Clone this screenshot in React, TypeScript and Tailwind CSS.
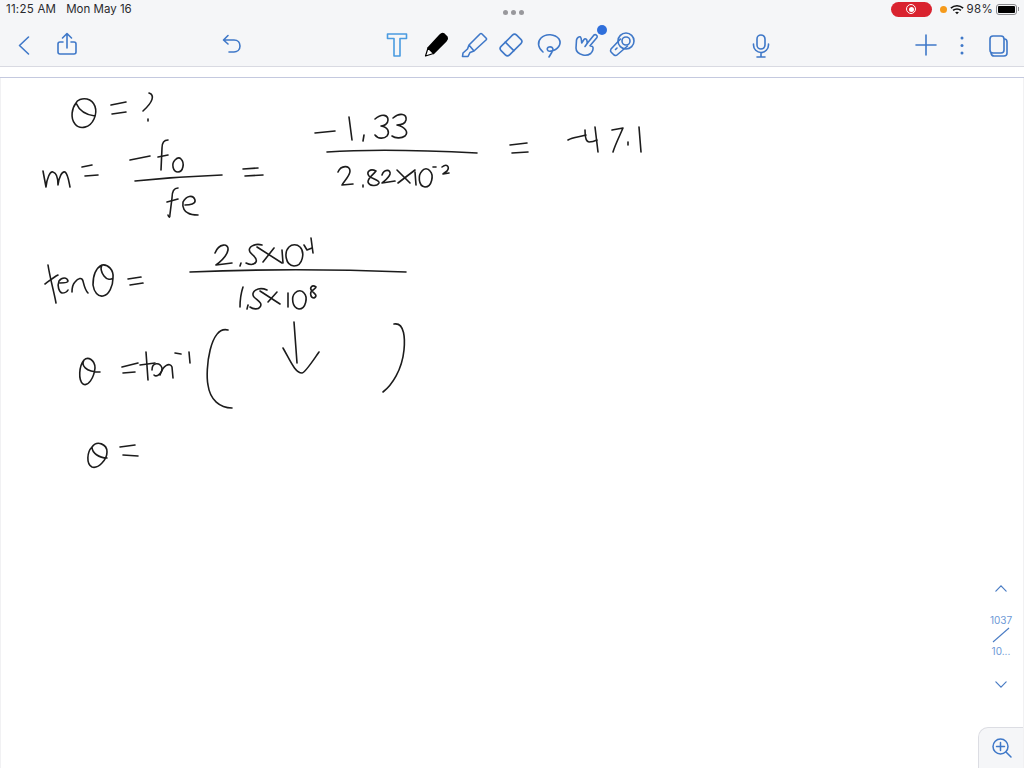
import type { ReactNode } from 'react';

// handwritten note, in page coordinates
const ink = [
  // theta = ?
  'M76,103 C72,108 70,118 75,124 C80,130 90,128 94,119 C98,110 95,101 87,99 C82,98 77,100 76,103 C79,110 86,115 95,116',
  'M111,105 L126,102', 'M112,114 L126,112',
  'M149,93 C155,95 153,102 143,111', 'M148,119 L148,121',
  // m = -fo / fe =
  'M43,171 L46,187 C47,178 50,171 53,172 C57,173 58,180 58,185 C59,177 62,171 65,172 C68,174 69,182 70,187',
  'M82,167 L92,165', 'M85,176 L98,175',
  'M130,160 L150,156', 'M168,140 C164,140 162,143 162,148 L161,170', 'M158,157 L168,155',
  'M175,160 C171,164 173,172 178,172 C183,172 185,163 181,159 C179,157 177,158 175,160',
  'M135,181 C165,178 195,176 222,175',
  'M178,188 C174,188 172,192 172,198 L170,214 C170,218 169,218 168,215', 'M167,202 L178,199',
  'M185,205 C190,205 196,204 195,200 C193,194 186,196 183,202 C182,208 185,212 188,213 C191,215 195,215 198,215',
  'M243,169 L258,168', 'M245,176 L263,175',
  // -1,33
  'M315,133 L335,131', 'M349,117 L352,140', 'M364,135 L363,141',
  'M375,119 C382,113 388,115 388,120 C388,124 384,126 381,126 C388,127 390,132 387,136 C384,139 378,139 375,135',
  'M393,118 C400,112 407,114 406,120 C405,124 400,125 397,125 C405,127 409,132 405,136 C401,139 395,138 392,136',
  'M327,152 C370,149 420,150 477,153',
  // 2,82x10^-2
  'M338,172 C341,165 350,165 350,171 C350,176 344,181 342,185 L353,184', 'M363,185 L363,187',
  'M376,171 C370,168 366,172 369,176 C372,179 380,180 379,183 C377,187 369,186 368,182 C368,178 372,176 376,171',
  'M382,175 C384,169 391,169 390,174 C389,178 384,181 382,183 L395,181',
  'M397,170 L410,183', 'M398,183 L415,170', 'M415,172 L416,185',
  'M422,171 C418,175 418,186 425,187 C432,187 434,175 430,171 C428,168 424,168 422,171',
  'M433,167 L436,167', 'M442,167 C447,163 450,167 447,171 L443,174 L449,173',
  // = -47.1
  'M510,145 L527,143', 'M512,153 L528,152',
  'M568,140 C573,137 580,137 586,135', 'M585,130 C585,136 586,142 589,142 C592,142 595,141 597,140', 'M595,127 L598,152',
  'M612,130 L623,128 C620,135 615,145 613,152', 'M628,142 L628,145', 'M639,127 L641,152',
  // tan theta =
  'M48,265 C50,278 54,292 56,303', 'M45,284 C49,281 54,277 58,275',
  'M60,283 C63,283 68,283 68,281 C67,277 62,277 59,281 C57,286 59,292 62,293 C64,293 67,292 68,290',
  'M72,292 C72,287 73,284 75,282 C78,278 82,277 83,281 C84,285 85,290 88,293',
  'M102,265 C96,268 93,276 93,285 C94,292 98,297 103,296 C109,295 113,286 113,278 C114,270 108,264 102,265 C100,269 101,272 104,276 C107,280 111,280 113,278',
  'M128,279 L141,277', 'M130,285 L143,283',
  'M190,272 C260,269 330,269 406,272',
  // 2,5x10^4
  'M215,253 C219,243 229,243 228,250 C227,256 220,262 216,265 L232,263', 'M241,263 L240,266',
  'M262,245 C255,243 247,247 250,252 C253,256 258,258 256,262 C254,265 250,265 246,263',
  'M257,247 L282,263', 'M263,262 L274,248', 'M282,250 L283,263',
  'M289,247 C284,252 285,265 294,266 C303,266 305,252 300,247 C297,244 292,244 289,247',
  'M304,245 L307,250 L312,248', 'M311,238 L313,253',
  // 1,5x10^8
  'M243,287 C241,293 240,300 240,307', 'M248,305 L247,309',
  'M267,290 C258,286 250,292 254,297 C258,301 263,303 260,307 C258,310 253,309 250,307',
  'M260,291 L280,304', 'M268,302 L277,292', 'M288,293 L288,307',
  'M295,293 C291,297 292,308 299,309 C306,309 308,297 304,293 C302,290 298,290 295,293',
  'M316,287 C312,284 309,288 312,291 C315,294 318,296 314,298 C310,298 310,292 312,291 C314,289 316,288 316,287',
  // theta = tan^-1 ( arrow )
  'M84,360 C79,366 78,380 83,384 C88,387 94,378 95,368 C95,360 88,356 84,360 C81,365 85,372 100,372',
  'M122,367 L138,363', 'M123,373 L135,372',
  'M146,352 L148,380', 'M140,365 L155,363',
  'M152,370 C152,362 160,362 162,368 C163,372 157,378 154,375', 'M160,375 C163,365 170,362 172,367 L173,378',
  'M175,353 L181,354', 'M189,352 L190,363',
  'M228,330 C210,325 205,370 208,385 C210,400 220,408 232,408',
  'M294,322 L297,363', 'M283,348 C290,360 295,373 302,373 C305,373 312,362 319,352',
  'M394,324 C405,322 405,340 404,350 C402,370 392,385 383,392',
  // theta =
  'M92,447 C87,452 86,464 92,467 C98,469 107,460 107,452 C107,444 97,440 92,447 C92,453 99,458 107,458',
  'M120,447 L135,445', 'M123,455 L138,456',
];

function Icon({ ml, children }: { ml: string; children: ReactNode }) {
  return (
    <svg viewBox="0 0 28 28" fill="none" stroke="currentColor" strokeWidth="1.6" strokeLinecap="round" strokeLinejoin="round" className={`w-7 h-7 shrink-0 ${ml}`}>
      {children}
    </svg>
  );
}

function StatusBar() {
  return (
    <div className="h-[31px] relative flex items-start text-[11.5px] leading-[18px] text-[#2a2a2e]">
      <span className="ml-[6px] tracking-[0.25px]">11:25 AM</span>
      <span className="ml-[10px]">Mon May 16</span>
      <div className="absolute left-[503px] top-[10px] flex gap-[3px]">
        <span className="w-[5px] h-[5px] rounded-full bg-[#98989c]" />
        <span className="w-[5px] h-[5px] rounded-full bg-[#98989c]" />
        <span className="w-[5px] h-[5px] rounded-full bg-[#98989c]" />
      </div>
      <div className="ml-auto mr-[5px] h-[18px] flex items-center">
        <div className="w-[41px] h-[15px] rounded-full bg-[#d9232f] flex items-center justify-center">
          <span className="w-[10px] h-[10px] rounded-full border border-white flex items-center justify-center">
            <span className="w-[5px] h-[5px] rounded-full bg-white" />
          </span>
        </div>
        <span className="ml-[8px] w-[7px] h-[7px] rounded-full bg-[#f59a1b]" />
        <svg viewBox="0 0 16 12" className="ml-[3px] w-[14px] h-[11px]" fill="none" stroke="#111" strokeWidth="1.8">
          <path d="M1,4.5 C5,0.8 11,0.8 15,4.5" />
          <path d="M3.5,7 C6,4.8 10,4.8 12.5,7" />
          <path d="M8,11.5 L5.8,9.2 C7,8.2 9,8.2 10.2,9.2 Z" fill="#111" stroke="none" />
        </svg>
        <span className="ml-[3px] tracking-[0.3px]">98%</span>
        <div className="ml-[3px] w-[21px] h-[11px] rounded-[3px] border border-[#8a8a8e] p-[1px]">
          <div className="w-full h-full rounded-[1px] bg-black" />
        </div>
        <span className="ml-[1px] w-[1px] h-[4px] bg-[#8a8a8e]" />
      </div>
    </div>
  );
}

function ToolBar() {
  return (
    <div className="relative h-[28px] flex items-center pl-[10px] text-[#3f78c8]">
      <Icon ml="">
        <path d="M18.5,6 L9.5,14.5 L18.5,23" />
      </Icon>
      <Icon ml="ml-[15px]">
        <path d="M10,11 H7 a2,2 0 0 0 -2,2 V21 a2,2 0 0 0 2,2 H21 a2,2 0 0 0 2,-2 V13 a2,2 0 0 0 -2,-2 H18" />
        <path d="M14,17 V3 M9.5,7 L14,2.5 L18.5,7" />
      </Icon>
      <Icon ml="ml-[137px]">
        <path d="M10,4.5 L5.5,9 L10,13 M6,9 H16 C20,9 22,12 22,15 C22,19 19,21 16,21 H11" />
      </Icon>
      <Icon ml="ml-[137px] text-[#4a9be0]">
        <path d="M4.5,3 H23.5 V7.5 H17 V25 H11 V7.5 H4.5 Z" />
      </Icon>
      <Icon ml="ml-[11px] text-black">
        <path d="M6,17 L18,4 Q20,2 22,3 L25,6 Q26,8 24,10 L11.5,22.5 Z" fill="#000" />
        <path d="M3.5,25 L6,17 L11.5,22.5 Z" fill="#fff" strokeWidth="1.2" />
      </Icon>
      <Icon ml="ml-[10px]">
        <path d="M9,14 L20,3 Q21,2 22,3 L26,7 Q27,8 26,9 L14,20 Z M9,14 L7.5,18 L3,22 L2.5,25.5 L8,25.5 L10,21.5 L14,20" />
      </Icon>
      <Icon ml="ml-[9px]">
        <rect x="3" y="8" width="22" height="12" rx="3" transform="rotate(-45 14 14)" />
        <line x1="12" y1="8" x2="12" y2="20" transform="rotate(-45 14 14)" />
      </Icon>
      <Icon ml="ml-[10px]">
        <path d="M8,21 C3,17 2,11 6,7 C11,2 20,3 24,8 C27,13 23,19 16,20 C12,21 11,17 14,16 C18,15 19,19 17,21 L14,26" />
      </Icon>
      <Icon ml="ml-[9px]">
        <path d="M11,24 C7,23 4,21 4,17 L4.5,9 C5,7 7,5 8.5,6 C9.5,7 9.5,10 9.7,12 L12,8.5 C13,7 15,8 15,10 L15.3,12.3 L22,4 C23.5,3 26,4.5 25,6.5 L18,14.7 L20.5,15.5 C22,17 20.5,21 18.7,22.5 C16,24.5 13,24.5 11,24 Z" />
        <path d="M15.3,12.3 L13,15.5" />
      </Icon>
      <Icon ml="ml-[8px]">
        <circle cx="18" cy="10" r="8" />
        <circle cx="18" cy="10" r="4" />
        <path d="M12.5,8 L3,18 Q2,20 3,21 L6,24 Q8,25 9,24 L19.5,15" />
        <path d="M7.5,18.5 L9,17" />
      </Icon>
      <Icon ml="ml-[111px]">
        <rect x="10" y="4" width="8" height="14" rx="4" />
        <path d="M6.5,13 V14 a7.5,7.5 0 0 0 15,0 V13 M14,21.5 V26 M10,26 H18" />
      </Icon>
      <Icon ml="ml-[137px]">
        <path d="M14,4 V24 M4,14 H24" />
      </Icon>
      <Icon ml="ml-[8px]">
        <circle cx="14" cy="7" r="1.5" fill="currentColor" stroke="none" />
        <circle cx="14" cy="14.5" r="1.5" fill="currentColor" stroke="none" />
        <circle cx="14" cy="22" r="1.5" fill="currentColor" stroke="none" />
      </Icon>
      <Icon ml="ml-[8px]">
        <rect x="6" y="5" width="14" height="17" rx="3" />
        <path d="M20.5,8 Q23,8 23,11 V22 Q23,25 20,25 H10 Q7.5,25 7,22" />
      </Icon>
      <span className="absolute left-[597px] top-[-6px] w-[10px] h-[10px] rounded-full bg-[#2f6fdb]" />
    </div>
  );
}

function PageControls() {
  return (
    <div className="absolute right-0 top-[507px] w-[44px] flex flex-col items-center text-[#4a7cc4]">
      <svg viewBox="0 0 14 8" className="w-[12px] h-[7px]" fill="none" stroke="currentColor" strokeWidth="1.4" strokeLinecap="round">
        <path d="M1,7 L7,1 L13,7" />
      </svg>
      <span className="mt-[21px] text-[10px] leading-[14px] text-[#6c98d6]">1037</span>
      <svg viewBox="0 0 18 16" className="w-[18px] h-[16px]" fill="none" stroke="currentColor" strokeWidth="1.1">
        <path d="M1,15 L17,1" />
      </svg>
      <span className="mt-[1px] text-[10px] leading-[14px] text-[#6c98d6]">10...</span>
      <svg viewBox="0 0 14 8" className="mt-[23px] w-[12px] h-[7px]" fill="none" stroke="currentColor" strokeWidth="1.4" strokeLinecap="round">
        <path d="M1,1 L7,7 L13,1" />
      </svg>
    </div>
  );
}

function ZoomButton() {
  return (
    <div className="absolute right-0 bottom-0 w-[45px] h-[41px] bg-[#f5f6f8] border-l border-t border-[#dcdde3] rounded-tl-[10px] flex items-center justify-center text-[#3f78c8]">
      <svg viewBox="0 0 22 22" className="w-[22px] h-[22px] ml-[1px]" fill="none" stroke="currentColor" strokeWidth="1.5" strokeLinecap="round">
        <circle cx="9.5" cy="9.5" r="7.5" />
        <path d="M9.5,5.5 V13.5 M5.5,9.5 H13.5 M15,15 L20,20" />
      </svg>
    </div>
  );
}

export default function App() {
  return (
    <div className="w-[1024px] h-[768px] overflow-hidden flex flex-col bg-white font-['Inter','Liberation_Sans',sans-serif]">
      <div className="h-[67px] shrink-0 bg-[#f5f6f8] border-b border-[#d9dae2]">
        <StatusBar />
        <ToolBar />
      </div>
      <div className="h-[11px] shrink-0 bg-white border-b border-[#c4c9df]" />
      <div className="relative flex-1 border-x border-[#f1f1f3]">
        <svg viewBox="0 78 1024 690" className="absolute left-[-1px] top-0 w-[1024px] h-[690px]" fill="none" stroke="#1c1c1c" strokeWidth="1.6" strokeLinecap="round" strokeLinejoin="round">
          {ink.map((d, i) => (
            <path key={i} d={d} />
          ))}
        </svg>
        <PageControls />
        <ZoomButton />
      </div>
    </div>
  );
}
